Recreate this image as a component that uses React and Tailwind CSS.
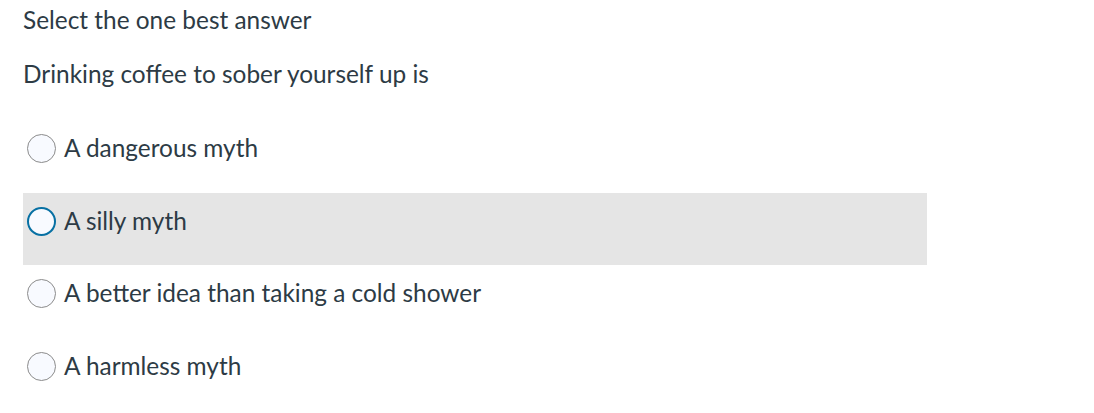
import { useState } from 'react';

const options = [
  'A dangerous myth',
  'A silly myth',
  'A better idea than taking a cold shower',
  'A harmless myth',
];

export default function App() {
  const [hovered] = useState(1);

  return (
    <div className="min-h-[413px] bg-white font-['Lato','Open_Sans',sans-serif] text-[#2d3b45]">
      <div className="pl-[23px] pt-[4px]">
        <p className="text-[24.4px] leading-[32px]">Select the one best answer</p>
        <p className="mt-[22px] text-[24.4px] leading-[32px]">Drinking coffee to sober yourself up is</p>
      </div>
      <div className="mt-[30px] ml-[23px] w-[904px]">
        {options.map((opt, i) => (
          <label
            key={opt}
            className={`flex h-[72.5px] items-start gap-[8px] pl-[4px] pt-[13px] ${
              i === hovered ? 'bg-[#e5e5e5]' : ''
            }`}
          >
            <span
              className={`mt-[1px] h-[29px] w-[29px] shrink-0 rounded-full bg-[#f8faff] ${
                i === hovered ? 'border-[2px] border-[#0770a3]' : 'border border-[#8b8b8b]'
              }`}
            />
            <span className="text-[24.4px] leading-[30px]">{opt}</span>
          </label>
        ))}
      </div>
    </div>
  );
}
